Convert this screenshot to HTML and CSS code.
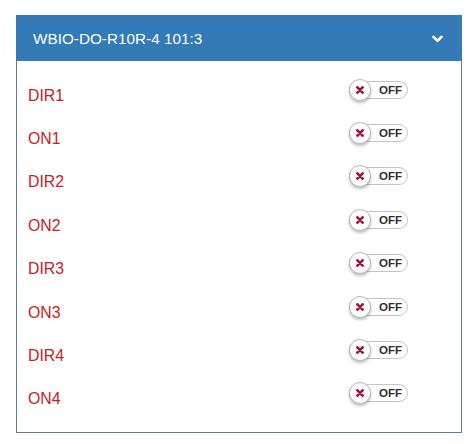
FILE: index.html
```html
<!DOCTYPE html>
<html lang="en">
<head>
    <meta charset="UTF-8">
    <meta name="viewport" content="width=device-width, initial-scale=1.0">
    <title>WBIO-DO-R10R-4 101:3</title>
    <link rel="stylesheet" href="styles.css">
</head>
<body>

    <div class="panel">
        <div class="panel-heading">
            <span class="panel-title">WBIO-DO-R10R-4 101:3</span>
            <svg class="chevron" width="11" height="8" viewBox="0 0 11 8">
                <path d="M1.5 1.8 L5.5 5.8 L9.5 1.8" fill="none" stroke="#fff" stroke-width="2.6" stroke-linecap="round" stroke-linejoin="round"/>
            </svg>
        </div>

        <div class="panel-body">
            <div class="control-row">
                <span class="control-name">DIR1</span>
                <span class="switch"><span class="knob"><svg width="8" height="8" viewBox="0 0 8 8"><path d="M1.4 1.4 L6.6 6.6 M6.6 1.4 L1.4 6.6" stroke="#9e1538" stroke-width="2.7" stroke-linecap="round"/></svg></span><span class="switch-label">OFF</span></span>
            </div>
            <div class="control-row">
                <span class="control-name">ON1</span>
                <span class="switch"><span class="knob"><svg width="8" height="8" viewBox="0 0 8 8"><path d="M1.4 1.4 L6.6 6.6 M6.6 1.4 L1.4 6.6" stroke="#9e1538" stroke-width="2.7" stroke-linecap="round"/></svg></span><span class="switch-label">OFF</span></span>
            </div>
            <div class="control-row">
                <span class="control-name">DIR2</span>
                <span class="switch"><span class="knob"><svg width="8" height="8" viewBox="0 0 8 8"><path d="M1.4 1.4 L6.6 6.6 M6.6 1.4 L1.4 6.6" stroke="#9e1538" stroke-width="2.7" stroke-linecap="round"/></svg></span><span class="switch-label">OFF</span></span>
            </div>
            <div class="control-row">
                <span class="control-name">ON2</span>
                <span class="switch"><span class="knob"><svg width="8" height="8" viewBox="0 0 8 8"><path d="M1.4 1.4 L6.6 6.6 M6.6 1.4 L1.4 6.6" stroke="#9e1538" stroke-width="2.7" stroke-linecap="round"/></svg></span><span class="switch-label">OFF</span></span>
            </div>
            <div class="control-row">
                <span class="control-name">DIR3</span>
                <span class="switch"><span class="knob"><svg width="8" height="8" viewBox="0 0 8 8"><path d="M1.4 1.4 L6.6 6.6 M6.6 1.4 L1.4 6.6" stroke="#9e1538" stroke-width="2.7" stroke-linecap="round"/></svg></span><span class="switch-label">OFF</span></span>
            </div>
            <div class="control-row">
                <span class="control-name">ON3</span>
                <span class="switch"><span class="knob"><svg width="8" height="8" viewBox="0 0 8 8"><path d="M1.4 1.4 L6.6 6.6 M6.6 1.4 L1.4 6.6" stroke="#9e1538" stroke-width="2.7" stroke-linecap="round"/></svg></span><span class="switch-label">OFF</span></span>
            </div>
            <div class="control-row">
                <span class="control-name">DIR4</span>
                <span class="switch"><span class="knob"><svg width="8" height="8" viewBox="0 0 8 8"><path d="M1.4 1.4 L6.6 6.6 M6.6 1.4 L1.4 6.6" stroke="#9e1538" stroke-width="2.7" stroke-linecap="round"/></svg></span><span class="switch-label">OFF</span></span>
            </div>
            <div class="control-row">
                <span class="control-name">ON4</span>
                <span class="switch"><span class="knob"><svg width="8" height="8" viewBox="0 0 8 8"><path d="M1.4 1.4 L6.6 6.6 M6.6 1.4 L1.4 6.6" stroke="#9e1538" stroke-width="2.7" stroke-linecap="round"/></svg></span><span class="switch-label">OFF</span></span>
            </div>
        </div>
    </div>

</body>
</html>
```

FILE: styles.css
```css
* {
    box-sizing: border-box;
    font-family: 'Liberation Sans', Arial, Helvetica, sans-serif;
}

body {
    margin: 0;
    padding: 15px 12px 0 16px;
    background: #fff;
}

.panel {
    width: 446px;
    height: 418px;
    border: 1px solid #5f7f9b;
    background: #fff;
}

.panel-heading {
    height: 46px;
    background-color: #337ab7;
    margin: -1px -1px 0 -1px;
    padding: 0 19px 0 17px;
    display: flex;
    align-items: center;
    justify-content: space-between;
}

.panel-title {
    color: #fff;
    font-size: 15.3px;
    margin-top: 1px;
}

.chevron {
    display: block;
    margin-top: 2px;
}

.panel-body {
    padding: 11.5px 53px 0 11px;
}

.control-row {
    height: 43.43px;
    display: flex;
    justify-content: space-between;
    align-items: flex-start;
}

.control-name {
    color: #c8201e;
    font-size: 15.8px;
    line-height: 43.43px;
    padding-top: 1px;
}

.switch {
    width: 59px;
    height: 18px;
    margin-top: 8px;
    border: 1px solid #c4c4c4;
    border-radius: 9px;
    background: #fff;
    display: flex;
    align-items: center;
}

.knob {
    width: 22px;
    height: 22px;
    flex: none;
    margin-left: -1px;
    border: 1px solid #b9b9b9;
    border-radius: 50%;
    background: #fff;
    box-shadow: 0 2px 3px rgba(0, 0, 0, 0.25);
    display: flex;
    align-items: center;
    justify-content: center;
}

.knob svg {
    display: block;
}

.switch-label {
    margin-left: 8px;
    font-size: 11.5px;
    font-weight: bold;
    color: #2f2f2f;
}
```
